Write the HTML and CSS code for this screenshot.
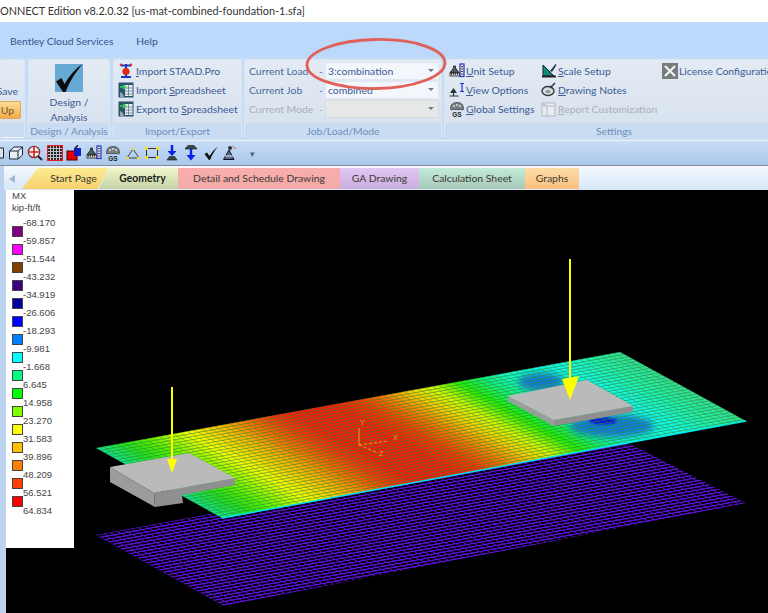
FILE: index.html
```html
<!DOCTYPE html>
<html lang="en">
<head>
<meta charset="utf-8">
<title>STAAD Foundation Advanced</title>
<link rel="stylesheet" href="styles.css">
</head>
<body>
<svg class="defs" width="0" height="0" aria-hidden="true">
  <symbol id="i-ruler" viewBox="0 0 16 16">
    <path d="M1 9.500 4.500 5V3h2v2L10 9.500z" fill="#4a5a60" stroke="#222" stroke-width=".8"/>
    <rect x="1" y="10" width="9.500" height="3" fill="#d8d8d0" stroke="#222" stroke-width=".8"/>
    <path d="M2.500 10v2M4.500 10v2M6.500 10v2M8.500 10v2" stroke="#222" stroke-width=".7"/>
    <rect x="11" y="1" width="4" height="12.500" fill="#e8e8c8" stroke="#2030d0" stroke-width="1.200"/>
    <path d="M12 3.500h2M12 6h2M12 8.500h2M12 11h2" stroke="#222" stroke-width=".8"/>
  </symbol>
  <symbol id="i-gs" viewBox="0 0 16 16">
    <path d="M1.500 8C1.500 3.500 4 1.500 8 1.500S14.500 3.500 14.500 8c0 1-1 1-2 .6H3.500C2.500 9 1.500 9 1.500 8z" fill="#77807f" stroke="#333" stroke-width=".7"/>
    <circle cx="5" cy="5" r="1" fill="#ddd"/><circle cx="8" cy="4" r="1" fill="#ddd"/><circle cx="11" cy="5" r="1" fill="#ddd"/>
    <text x="8" y="15.500" class="gs-text">GS</text>
  </symbol>
  <symbol id="i-sheet" viewBox="0 0 16 16">
    <rect x=".5" y=".5" width="15" height="15" fill="#2c5368"/>
    <rect x="7" y="3" width="7.500" height="11" fill="#e8eef2"/>
    <path d="M7 6h7.500M7 9h7.500M7 12h7.500M10.500 3v11" stroke="#4c6c80" stroke-width=".7"/>
    <path d="M2 5h5M5 3l2.500 2L5 7" stroke="#2fd050" stroke-width="1.500" fill="none"/>
    <path d="M2 10l3 2 1 3H2z" fill="#8fa6b4"/>
  </symbol>
</svg>

<header class="titlebar"><span class="title">ONNECT Edition v8.2.0.32 [us-mat-combined-foundation-1.sfa]</span></header>

<nav class="menubar">
  <span class="menu-item">Bentley Cloud Services</span>
  <span class="menu-item">Help</span>
</nav>

<section class="ribbon">
  <div class="group group-save">
    <div class="group-body save-body">
      <span class="save-text">Save</span>
      <span class="up-btn">Up</span>
    </div>
    <div class="group-label"></div>
  </div>

  <div class="group group-design">
    <div class="group-body design-body">
      <svg class="design-icon" viewBox="0 0 28 28">
        <rect width="28" height="28" fill="#66a9d4"/>
        <path d="M1 17.500 6.500 14l3 6C14 12 20 5 27.500 0 21 8 14 18 10.500 28.500L8 28z" fill="#0a0a0a"/>
      </svg>
      <span class="design-text">Design /<br>Analysis</span>
    </div>
    <div class="group-label">Design / Analysis</div>
  </div>

  <div class="group group-import">
    <div class="group-body rows">
      <div class="cmd">
        <svg class="ico" viewBox="0 0 16 16">
          <path d="M3 2.500h10M8 1v14M3 14h10" stroke="#2038c0" stroke-width="2" fill="none"/>
          <circle cx="8" cy="8.500" r="3.600" fill="#e02818"/>
          <circle cx="3" cy="1.800" r="1.200" fill="#e02818"/><circle cx="13" cy="1.800" r="1.200" fill="#e02818"/>
        </svg>
        <span><u>I</u>mport STAAD.Pro</span>
      </div>
      <div class="cmd"><svg class="ico"><use href="#i-sheet"/></svg><span>Import <u>S</u>preadsheet</span></div>
      <div class="cmd"><svg class="ico"><use href="#i-sheet"/></svg><span>Export to <u>S</u>preadsheet</span></div>
    </div>
    <div class="group-label">Import/Export</div>
  </div>

  <div class="group group-job">
    <div class="group-body job-grid">
      <span class="job-label">Current Load</span><span class="job-dash">-</span>
      <div class="combo"><span>3:combination</span><i class="caret"></i></div>
      <span class="job-label">Current Job</span><span class="job-dash">-</span>
      <div class="combo"><span>combined</span><i class="caret"></i></div>
      <span class="job-label is-off">Current Mode</span><span class="job-dash is-off">-</span>
      <div class="combo combo-off"><span></span><i class="caret"></i></div>
    </div>
    <div class="group-label">Job/Load/Mode</div>
  </div>

  <div class="group group-settings">
    <div class="group-body settings-grid">
      <div class="rows col-a">
        <div class="cmd"><svg class="ico"><use href="#i-ruler"/></svg><span><u>U</u>nit Setup</span></div>
        <div class="cmd">
          <svg class="ico" viewBox="0 0 16 16">
            <path d="M1 11 4.500 6 8 11z" fill="#23343a"/><path d="M4.500 11v3M.5 14h9" stroke="#23343a" stroke-width="1.200"/>
            <path d="M11 1.500h4M13 1.500v8M11 9.500h4" stroke="#2030e0" stroke-width="1.200" fill="none"/>
          </svg>
          <span><u>V</u>iew Options</span>
        </div>
        <div class="cmd"><svg class="ico"><use href="#i-gs"/></svg><span><u>G</u>lobal Settings</span></div>
      </div>
      <div class="rows col-b">
        <div class="cmd">
          <svg class="ico" viewBox="0 0 16 16">
            <path d="M2 2v11h11z" fill="#108a78" stroke="#123" stroke-width="1"/>
            <path d="M9 8 14.500 1l1 1L11 9z" fill="#20384a"/>
            <path d="M1 13.500h14" stroke="#222" stroke-width="2"/>
          </svg>
          <span><u>S</u>cale Setup</span>
        </div>
        <div class="cmd">
          <svg class="ico" viewBox="0 0 16 16">
            <ellipse cx="7" cy="9" rx="6" ry="4.500" fill="#d8dde0" stroke="#2e3a3c" stroke-width="1.400"/>
            <ellipse cx="7" cy="9.500" rx="2.500" ry="1.500" fill="#7a9a98"/>
            <path d="M9 6l5-5" stroke="#2e3a3c" stroke-width="1.600"/>
          </svg>
          <span><u>D</u>rawing Notes</span>
        </div>
        <div class="cmd is-off">
          <svg class="ico" viewBox="0 0 16 16">
            <rect x="1" y="2" width="13" height="13" fill="#eef1f4" stroke="#a8b0b8"/>
            <path d="M1 5h13M6 5v10" stroke="#a8b0b8"/>
            <rect x="2" y="2.500" width="3" height="2" fill="#b0c0cc"/>
          </svg>
          <span><u>R</u>eport Customization</span>
        </div>
      </div>
      <div class="rows col-c">
        <div class="cmd">
          <svg class="ico" viewBox="0 0 16 16">
            <rect width="16" height="16" fill="#767c7c"/>
            <path d="M3 3 13 13M13 3 3 13" stroke="#f4f4f4" stroke-width="2.200"/>
          </svg>
          <span>License Configuration</span>
        </div>
      </div>
    </div>
    <div class="group-label">Settings</div>
  </div>
</section>

<section class="toolbar">
  <svg class="tool tool-cut" viewBox="0 0 4 16"><path d="M0 3h3.500v10H0" fill="#d8e4f0" stroke="#222"/></svg>
  <svg class="tool" viewBox="0 0 16 16"><path d="M1.500 6 6 2h8.500v8L10 14H1.500zM1.500 6H10v8M10 6l4.500-4" fill="#e6eef6" stroke="#1c2830" stroke-width="1"/></svg>
  <svg class="tool" viewBox="0 0 16 16">
    <circle cx="7" cy="7" r="5.700" fill="#f4f4f4" stroke="#7a3030" stroke-width="1.200"/>
    <path d="M7 1v12M1 7h12" stroke="#d02020" stroke-width="1.600"/>
    <path d="M11 11l4 4" stroke="#223" stroke-width="2"/>
  </svg>
  <svg class="tool" viewBox="0 0 16 16">
    <rect x=".7" y=".7" width="14.600" height="14.600" fill="#222" stroke="#e02020" stroke-width="1.400"/>
    <path d="M3.500 1v14M6.500 1v14M9.500 1v14M12.500 1v14M1 3.500h14M1 6.500h14M1 9.500h14M1 12.500h14" stroke="#c8d0d8" stroke-width=".9"/>
  </svg>
  <svg class="tool" viewBox="0 0 16 16">
    <rect x="1" y="6" width="10" height="9" fill="#e80000" stroke="#400"/>
    <rect x="8" y="3" width="7" height="8" fill="#1020c0"/>
    <path d="M9 3 12 .5" stroke="#111" stroke-width="1.500"/>
  </svg>
  <svg class="tool"><use href="#i-ruler"/></svg>
  <svg class="tool"><use href="#i-gs"/></svg>
  <svg class="tool" viewBox="0 0 16 16">
    <path d="M2 13 8 4l6 9z" fill="none" stroke="#444" stroke-width="1"/>
    <path d="M1 12h3v2H1zM12 12h3v2h-3zM7 3h2.500v2H7z" fill="#f0e020"/>
  </svg>
  <svg class="tool" viewBox="0 0 16 16">
    <rect x="2.500" y="3.500" width="11" height="9" fill="none" stroke="#333" stroke-width="1"/>
    <path d="M1 2h3v3H1zM12 2h3v3h-3zM1 11h3v3H1zM12 11h3v3h-3z" fill="#f0e020"/>
  </svg>
  <svg class="tool" viewBox="0 0 16 16">
    <path d="M8 0v7" stroke="#0820e8" stroke-width="2.400"/>
    <path d="M3.500 6h9L8 11z" fill="#0820e8"/>
    <path d="M5.500 11.500h5L13 15H3z" fill="#3a4a4a" stroke="#111" stroke-width=".6"/>
  </svg>
  <svg class="tool" viewBox="0 0 16 16">
    <path d="M5 .5h6L14 4H2z" fill="#3a4a4a" stroke="#111" stroke-width=".6"/>
    <path d="M8 4v7" stroke="#0820e8" stroke-width="2.400"/>
    <path d="M3.500 10h9L8 15.500z" fill="#0820e8"/>
  </svg>
  <svg class="tool" viewBox="0 0 16 16"><path d="M1.500 9 4 7.500 6.500 11C9 7 11.500 4 15 1.500 11.500 5.500 9 10 7 15H6z" fill="#111"/></svg>
  <svg class="tool" viewBox="0 0 16 16">
    <path d="M1.500 14.500 7 5l5 9.500z" fill="#5868a0" stroke="#111" stroke-width="1"/>
    <circle cx="8" cy="3" r="2" fill="#26343c"/>
    <path d="M10 1l4 3" stroke="#e08080" stroke-width="1.200"/>
    <path d="M3 11h8" stroke="#eee" stroke-width="1"/>
  </svg>
  <span class="more">▾</span>
</section>

<section class="tabstrip">
  <span class="tab-arrow"></span>
  <div class="tab tab-start">Start Page</div>
  <div class="tab tab-geom">Geometry</div>
  <div class="tab tab-detail">Detail and Schedule Drawing</div>
  <div class="tab tab-ga">GA Drawing</div>
  <div class="tab tab-calc">Calculation Sheet</div>
  <div class="tab tab-graphs">Graphs</div>
</section>

<main class="workspace">
  <div class="side-strip"></div>
  <aside class="legend">
    <div class="legend-head">MX<br>kip-ft/ft</div>
    <div class="legend-scale">
      <div class="swatches">
        <i class="sw c1"></i><i class="sw c2"></i><i class="sw c3"></i><i class="sw c4"></i>
        <i class="sw c5"></i><i class="sw c6"></i><i class="sw c7"></i><i class="sw c8"></i>
        <i class="sw c9"></i><i class="sw c10"></i><i class="sw c11"></i><i class="sw c12"></i>
        <i class="sw c13"></i><i class="sw c14"></i><i class="sw c15"></i><i class="sw c16"></i>
      </div>
      <div class="values">
        <span>-68.170</span><span>-59.857</span><span>-51.544</span><span>-43.232</span><span>-34.919</span>
        <span>-26.606</span><span>-18.293</span><span>-9.981</span><span>-1.668</span><span>6.645</span>
        <span>14.958</span><span>23.270</span><span>31.583</span><span>39.896</span><span>48.209</span>
        <span>56.521</span><span>64.834</span>
      </div>
    </div>
  </aside>

  <svg class="scene" viewBox="74 190 694 423" preserveAspectRatio="xMinYMin slice">
    <defs>
      <pattern id="mesh-purple" width="7" height="5" patternUnits="userSpaceOnUse"
        patternTransform="matrix(1 -.1832 .84 .467 96 535)">
        <path d="M0 0H7M0 5H7" stroke="#5c10dc" stroke-width="2.200" fill="none"/>
        <path d="M0 0V5M7 0V5" stroke="#5c10dc" stroke-width="1.200" fill="none"/>
      </pattern>
      <pattern id="mesh-plate" width="7" height="5" patternUnits="userSpaceOnUse"
        patternTransform="matrix(1 -.1832 .84 .467 96 448)">
        <path d="M0 0H7M0 5H7" stroke="#2f8a30" stroke-opacity=".5" stroke-width="1.800" fill="none"/>
        <path d="M0 0V5M7 0V5" stroke="#2f8a30" stroke-opacity=".5" stroke-width="1.100" fill="none"/>
      </pattern>
      <linearGradient id="field" gradientUnits="userSpaceOnUse" x1="0" y1="0" x2="1" y2="0"
        gradientTransform="matrix(524 -96 126 70 96 448)">
        <stop offset="0" stop-color="#10e090"/>
        <stop offset=".05" stop-color="#20e020"/>
        <stop offset=".09" stop-color="#50f000"/>
        <stop offset=".17" stop-color="#ffff00"/>
        <stop offset=".24" stop-color="#ffb000"/>
        <stop offset=".29" stop-color="#ff6400"/>
        <stop offset=".33" stop-color="#ff3008"/>
        <stop offset=".37" stop-color="#ff1208"/>
        <stop offset=".45" stop-color="#ff1208"/>
        <stop offset=".5" stop-color="#ff3000"/>
        <stop offset=".55" stop-color="#ff7800"/>
        <stop offset=".6" stop-color="#ffd000"/>
        <stop offset=".64" stop-color="#d8f800"/>
        <stop offset=".69" stop-color="#20f000"/>
        <stop offset=".73" stop-color="#10f078"/>
        <stop offset=".78" stop-color="#10f8d0"/>
        <stop offset=".88" stop-color="#10f8f0"/>
        <stop offset=".95" stop-color="#20f0b0"/>
        <stop offset="1" stop-color="#30e098"/>
      </linearGradient>
      <filter id="soft" x="-30%" y="-60%" width="160%" height="220%"><feGaussianBlur stdDeviation="3"/></filter>
      <filter id="softer" x="-30%" y="-60%" width="160%" height="220%"><feGaussianBlur stdDeviation="1.200"/></filter>
      <clipPath id="plate-clip"><polygon points="96,448 620,352 746,421 222,518"/></clipPath>
    </defs>

    <polygon fill="url(#mesh-purple)" points="96,535 620,439 746,503 224,606"/>

    <polygon fill="url(#field)" points="96,448 620,352 746,421 222,518"/>
    <g clip-path="url(#plate-clip)">
      <ellipse cx="541" cy="382" rx="23" ry="9" fill="#1078e0" filter="url(#soft)"/>
      <ellipse cx="612" cy="426" rx="42" ry="11" fill="#1078e8" filter="url(#soft)"/>
      <ellipse cx="603" cy="421" rx="14" ry="3.500" fill="#0010e8" filter="url(#softer)"/>
    </g>
    <polygon fill="url(#mesh-plate)" points="96,448 620,352 746,421 222,518"/>
    <path class="plate-edge" d="M222 518 746 421"/>

    <g class="axes">
      <path d="M359 428V445"/>
      <path class="dash" d="M359 445 388 441M359 445 378 453"/>
      <text x="360" y="425">Y</text><text x="393" y="440">X</text><text x="379" y="456">Z</text>
    </g>

    <polygon class="slab-side-l" points="110,467 154,493 155,507 110,482"/>
    <polygon class="slab-side-r" points="154,493 235,478 235,485 182,495 183,503 155,507"/>
    <polygon class="slab-top" points="110,467 189,453 235,478 154,493"/>
    <polygon class="slab-side-l" points="508,396 554,420 554,426 508,401"/>
    <polygon class="slab-side-r" points="554,420 633,406 633,412 554,426"/>
    <polygon class="slab-top" points="508,396 587,380 633,406 554,420"/>

    <path class="arrow-line" d="M172 387V462"/>
    <polygon class="arrow-head" points="167,459 177,459 172,473"/>
    <path class="arrow-line" d="M570 259V385"/>
    <polygon class="arrow-head" points="562,379 579,376 570,400"/>
  </svg>
</main>

<svg class="callout" viewBox="0 0 150 62" aria-hidden="true">
  <ellipse cx="75" cy="31" rx="69" ry="24.500" transform="rotate(-1 75 31)"/>
</svg>
</body>
</html>
```

FILE: styles.css
```css
* { box-sizing: border-box; }
html, body { margin: 0; height: 100%; }
body {
  width: 768px;
  height: 613px;
  overflow: hidden;
  position: relative;
  display: flex;
  flex-direction: column;
  background: #000;
  font-family: Lato, "Open Sans", sans-serif;
  font-size: 10.400px;
  color: #3c5a94;
}
.defs { position: absolute; }

.titlebar {
  height: 22px;
  background: #fff;
  color: #333;
  font-size: 10.900px;
  line-height: 21px;
  white-space: nowrap;
  overflow: hidden;
}
.title { display: block; }

.menubar {
  height: 35px;
  background: #bcd8fa;
  display: flex;
  align-items: center;
  gap: 23px;
  padding: 3px 0 0 10px;
  font-size: 10.300px;
  color: #35558c;
}

.ribbon {
  height: 84px;
  display: flex;
  gap: 3px;
  background: linear-gradient(#c4dbf6, #c9dcf4);
  padding: 2px 0 2px;
  overflow: hidden;
  border-bottom: 1px solid #eef5fc;
}
.group {
  flex: none;
  display: flex;
  flex-direction: column;
  background: linear-gradient(#e3eaf3, #d6e1ee);
  border: 1px solid #d9e6f4;
  border-bottom-color: #eef6fc;
  border-radius: 3px;
}
.group-body { height: 63px; flex: none; }
.group-label {
  flex: 1;
  background: #c9dcf2;
  color: #6f90bc;
  text-align: center;
  font-size: 10.300px;
  line-height: 16px;
  white-space: nowrap;
}
.group-save { width: 25px; border-left: 0; }
.group-design { width: 82px; }
.group-import { width: 129px; }
.group-job { width: 198px; margin-left: -1px; }
.group-settings { width: 340px; margin-left: -1px; }

.save-body {
  display: flex;
  flex-direction: column;
  align-items: flex-end;
  padding-top: 23px;
}
.save-text { line-height: 16px; margin-right: 6px; white-space: nowrap; }
.up-btn {
  width: 22px;
  height: 18px;
  margin-right: 3px;
  margin-top: 2px;
  background: linear-gradient(#fbdc96, #f4ab48);
  border: 1px solid #d9a85c;
  border-left: 0;
  border-radius: 0 2px 2px 0;
  color: #6a5a34;
  text-align: right;
  padding-right: 6px;
  line-height: 16px;
}

.design-body {
  display: flex;
  flex-direction: column;
  align-items: center;
  padding-top: 4px;
}
.design-icon { width: 28px; height: 28px; flex: none; }
.design-text { text-align: center; line-height: 14.500px; margin-top: 3px; }

.rows {
  display: grid;
  grid-auto-rows: 19.200px;
  padding-top: 1px;
}
.cmd {
  display: flex;
  align-items: center;
  gap: 1px;
  white-space: nowrap;
}
.group-import .cmd { padding-left: 4px; gap: 2px; }
.ico { width: 16px; height: 16px; flex: none; }
.gs-text { font: 700 6.500px "Liberation Sans", sans-serif; text-anchor: middle; fill: #222; }
.is-off { color: #a9b0b8; }
.cmd.is-off .ico { opacity: .8; }

.job-grid {
  display: grid;
  grid-template-columns: 70px 6px 114px;
  grid-template-rows: 19.200px 19.200px 19.200px;
  align-items: center;
  padding: 1px 0 0 4px;
}
.job-label { white-space: nowrap; color: #4a6a9c; }
.job-label.is-off, .job-dash.is-off { color: #a9b0b8; }
.job-dash { color: #4a6a9c; }
.combo {
  height: 18px;
  display: flex;
  align-items: center;
  justify-content: space-between;
  padding: 0 4px 0 2px;
  background: #f3f7fc;
  border: 1px solid #dfe8f2;
  color: #3c5a94;
}
.combo-off { background: #e7e8e8; border-color: #d8dcdf; }
.caret {
  width: 0;
  height: 0;
  border: 3px solid transparent;
  border-top: 3px solid #6c7c90;
  border-bottom: 0;
}

.settings-grid {
  display: grid;
  grid-template-columns: 92px 121px 1fr;
  padding-left: 4px;
}

.toolbar {
  height: 25px;
  background: linear-gradient(#c7dcf6, #a9c8ec);
  border-bottom: 1px solid #8d8a8c;
  display: flex;
  align-items: center;
  gap: 3.500px;
  overflow: hidden;
}
.tool { width: 16px; height: 16px; flex: none; }
.tool-cut { width: 4px; }
.more { font-size: 9px; color: #45608c; margin-left: 8px; }

.tabstrip {
  height: 24px;
  display: flex;
  align-items: flex-end;
  background: linear-gradient(#f4f9fe, #d8e7f8);
  padding: 2px 0 1px 5px;
  border-left: 4px solid #bcd4f0;
  color: #3a3a34;
  font-size: 10.400px;
}
.tab-arrow {
  width: 0;
  height: 0;
  align-self: center;
  border: 4px solid transparent;
  border-right: 6px solid #9fb6d2;
  border-left: 0;
  margin-right: 7px;
  flex: none;
}
.tab {
  height: 21px;
  line-height: 20px;
  text-align: center;
  flex: none;
  white-space: nowrap;
}
.tab-start {
  width: 86px;
  padding-left: 17px;
  background: linear-gradient(#fbec90, #f8d06e);
  clip-path: polygon(18% 0, 100% 0, 88% 100%, 0 100%);
}
.tab-geom {
  width: 79px;
  margin-left: -9px;
  padding-left: 8px;
  font-weight: 700;
  color: #1c1c1c;
  background: linear-gradient(#f0f5ca, #c4d3a6);
  clip-path: polygon(11% 0, 100% 0, 100% 100%, 0 100%);
}
.tab-detail { width: 162px; background: linear-gradient(#f9aeae, #f3a9a6); }
.tab-ga { width: 79px; background: linear-gradient(#e2c6f4, #c9aede); }
.tab-calc { width: 106px; background: linear-gradient(#c2ebda, #a7c8b7); }
.tab-graphs { width: 54px; background: linear-gradient(#fddca6, #fbc07e); }

.workspace {
  flex: 1;
  min-height: 0;
  display: flex;
  background: #000;
}
.side-strip {
  width: 6px;
  height: 100%;
  flex: none;
  background: #bcd4f0;
}
.legend {
  width: 68px;
  height: 358px;
  flex: none;
  background: #fff;
  padding: 0 0 0 6px;
  font-family: "Liberation Sans", Arial, sans-serif;
  font-size: 9.500px;
  color: #444;
}
.legend-head { line-height: 12px; }
.legend-scale { display: flex; }
.swatches {
  display: flex;
  flex-direction: column;
  gap: 7px;
  padding-top: 12px;
  width: 11px;
  flex: none;
}
.sw {
  display: block;
  width: 11px;
  height: 11px;
  border: 1px solid #444;
}
.values {
  display: flex;
  flex-direction: column;
}
.values span { height: 18px; line-height: 18px; }
.c1 { background: #800080; }
.c2 { background: #ff00ff; }
.c3 { background: #804000; }
.c4 { background: #400080; }
.c5 { background: #0000a0; }
.c6 { background: #0000ff; }
.c7 { background: #0080ff; }
.c8 { background: #00ffff; }
.c9 { background: #00ff80; }
.c10 { background: #00ff00; }
.c11 { background: #80ff00; }
.c12 { background: #ffff00; }
.c13 { background: #ffc000; }
.c14 { background: #ff8000; }
.c15 { background: #ff4000; }
.c16 { background: #ff0000; }

.scene { flex: 1; min-width: 0; height: 100%; display: block; }
.plate-edge { stroke: #00e8e8; stroke-width: 1.500; fill: none; }
.axes { fill: none; stroke: #e8a020; stroke-width: 1; }
.axes .dash { stroke-dasharray: 3 2; }
.axes text { font: 7px "Liberation Sans", sans-serif; fill: #e8a020; stroke: none; }
.slab-top { fill: #bababa; }
.slab-side-l { fill: #9c9c9c; }
.slab-side-r { fill: #8f8f8f; }
.arrow-line { stroke: #ffff00; stroke-width: 2; fill: none; }
.arrow-head { fill: #ffff00; }

.callout {
  position: absolute;
  left: 301px;
  top: 33px;
  width: 150px;
  height: 62px;
  fill: none;
  stroke: #df6159;
  stroke-width: 2.800;
  pointer-events: none;
}
```
